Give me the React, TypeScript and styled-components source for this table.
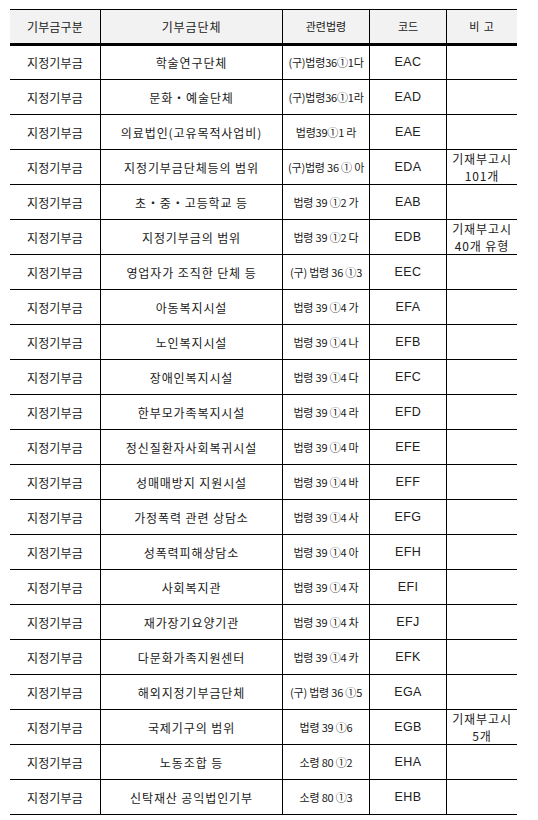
import styled, { createGlobalStyle } from "styled-components";

const GlobalStyle = createGlobalStyle`
  body {
    margin: 0;
    background: #ffffff;
  }
`;

const COLUMNS = "91px 182px 87px 77px 70px";

const Page = styled.div`
  width: 507px;
  padding: 9px 21px 0 10px;
  font-family: "Noto Sans CJK KR", "Noto Sans", sans-serif;
  color: #202020;
`;

const Table = styled.div`
  border-top: 1px solid #000;
`;

const HeaderRow = styled.div`
  display: grid;
  grid-template-columns: ${COLUMNS};
  height: 36px;
  box-sizing: border-box;
  background: #f2f2f2;
  border-bottom: 3px solid #000;
`;

const Body = styled.div``;

const Row = styled.div`
  display: grid;
  grid-template-columns: ${COLUMNS};
  height: 35px;
  box-sizing: border-box;
  border-bottom: 1px solid #000;

  &:first-child {
    height: 34px;
  }
`;

const Cell = styled.div<{ $spacing?: number; $size?: number; $latin?: boolean }>`
  display: flex;
  align-items: center;
  justify-content: center;
  text-align: center;
  white-space: pre-line;
  border-right: 1px solid #000;
  font-family: ${(p) =>
    p.$latin ? '"Liberation Sans", Arial, sans-serif' : "inherit"};
  font-size: ${(p) => p.$size ?? 12}px;
  letter-spacing: ${(p) => p.$spacing ?? 0}px;
  line-height: 17px;

  &:last-child {
    border-right: none;
  }
`;

type Entry = {
  group: string;
  name: string;
  law: string;
  code: string;
  note?: string;
};

const rows: Entry[] = [
  { group: "지정기부금", name: "학술연구단체", law: "(구)법령36①1다", code: "EAC" },
  { group: "지정기부금", name: "문화・예술단체", law: "(구)법령36①1라", code: "EAD" },
  { group: "지정기부금", name: "의료법인(고유목적사업비)", law: "법령39①1 라", code: "EAE" },
  { group: "지정기부금", name: "지정기부금단체등의 범위", law: "(구)법령 36 ① 아", code: "EDA", note: "기재부고시\n101개" },
  { group: "지정기부금", name: "초・중・고등학교 등", law: "법령 39 ①2 가", code: "EAB" },
  { group: "지정기부금", name: "지정기부금의 범위", law: "법령 39 ①2 다", code: "EDB", note: "기재부고시\n40개 유형" },
  { group: "지정기부금", name: "영업자가 조직한 단체 등", law: "(구) 법령 36 ①3", code: "EEC" },
  { group: "지정기부금", name: "아동복지시설", law: "법령 39 ①4 가", code: "EFA" },
  { group: "지정기부금", name: "노인복지시설", law: "법령 39 ①4 나", code: "EFB" },
  { group: "지정기부금", name: "장애인복지시설", law: "법령 39 ①4 다", code: "EFC" },
  { group: "지정기부금", name: "한부모가족복지시설", law: "법령 39 ①4 라", code: "EFD" },
  { group: "지정기부금", name: "정신질환자사회복귀시설", law: "법령 39 ①4 마", code: "EFE" },
  { group: "지정기부금", name: "성매매방지 지원시설", law: "법령 39 ①4 바", code: "EFF" },
  { group: "지정기부금", name: "가정폭력 관련 상담소", law: "법령 39 ①4 사", code: "EFG" },
  { group: "지정기부금", name: "성폭력피해상담소", law: "법령 39 ①4 아", code: "EFH" },
  { group: "지정기부금", name: "사회복지관", law: "법령 39 ①4 자", code: "EFI" },
  { group: "지정기부금", name: "재가장기요양기관", law: "법령 39 ①4 차", code: "EFJ" },
  { group: "지정기부금", name: "다문화가족지원센터", law: "법령 39 ①4 카", code: "EFK" },
  { group: "지정기부금", name: "해외지정기부금단체", law: "(구) 법령 36 ①5", code: "EGA" },
  { group: "지정기부금", name: "국제기구의 범위", law: "법령 39 ①6", code: "EGB", note: "기재부고시\n5개" },
  { group: "지정기부금", name: "노동조합 등", law: "소령 80 ①2", code: "EHA" },
  { group: "지정기부금", name: "신탁재산 공익법인기부", law: "소령 80 ①3", code: "EHB" },
];

export default function App() {
  return (
    <Page>
      <GlobalStyle />
      <Table>
        <HeaderRow>
          <Cell $spacing={0.2}>기부금구분</Cell>
          <Cell $spacing={0.9}>기부금단체</Cell>
          <Cell $size={11}>관련법령</Cell>
          <Cell $size={11}>코드</Cell>
          <Cell $size={11} $spacing={1}>비 고</Cell>
        </HeaderRow>
        <Body>
          {rows.map((r) => (
            <Row key={r.code}>
              <Cell $spacing={0.2}>{r.group}</Cell>
              <Cell $spacing={0.9}>{r.name}</Cell>
              <Cell $size={11} $spacing={-0.2}>{r.law}</Cell>
              <Cell $latin $size={12.5} $spacing={0.4}>{r.code}</Cell>
              <Cell $spacing={0.9}>{r.note ?? ""}</Cell>
            </Row>
          ))}
        </Body>
      </Table>
    </Page>
  );
}
